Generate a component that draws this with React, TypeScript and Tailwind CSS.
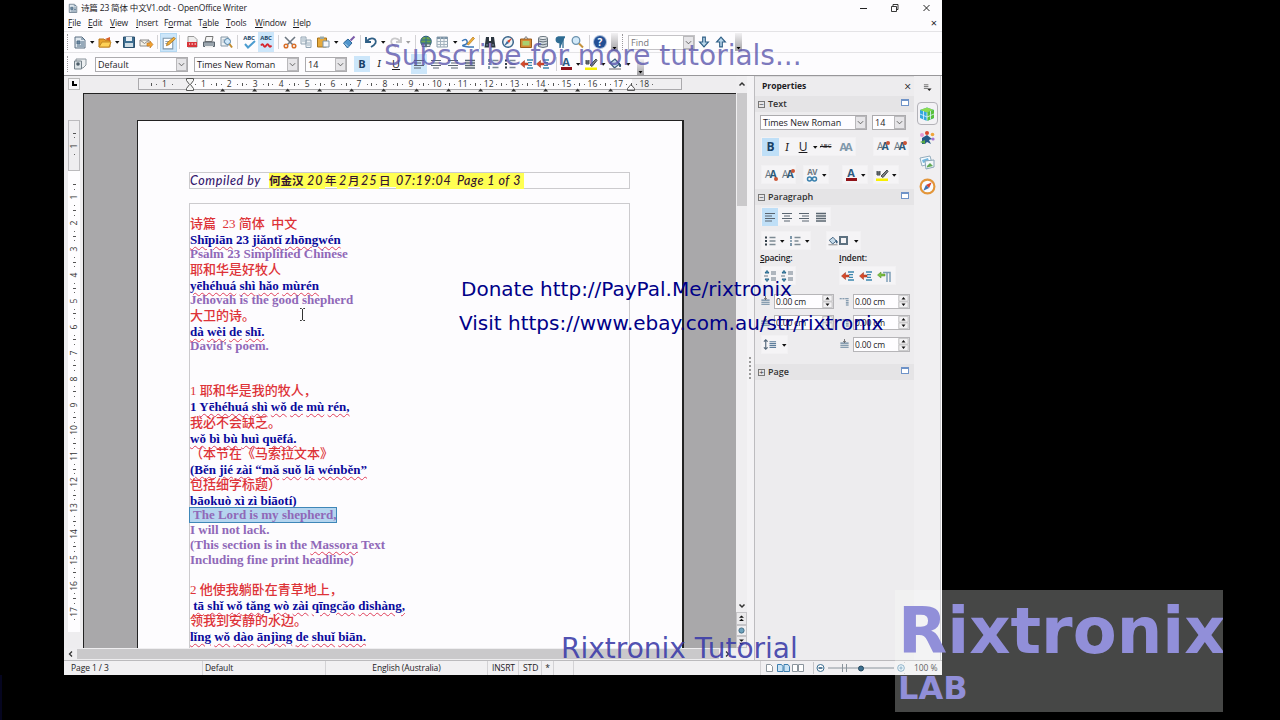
import { type ReactNode } from "react";
import clsx from "clsx";

const navy = "#2f5f86";

// every toolbar glyph is drawn on a 16x16 grid
const glyphs: Record<string, ReactNode> = {
  doc: (
    <>
      <path d="M3 3h7l3 3v8H3z" fill="#dfe7ee" stroke="#5b6f82" />
      <path d="M5 7h3v3H5zM9 8h3M9 10h3M5 12h7M9 5h3" fill="#6f8ba4" stroke="#4f6c86" />
    </>
  ),
  open: (
    <>
      <path d="M2 5h5l1 1h5v7H2z" fill="#e9a32c" stroke="#b5741b" />
      <path d="M2 13l3-5h9l-2 5z" fill="#ffd257" stroke="#c58a24" />
      <path d="M8 5l5-2v4z" fill="#d9602b" />
    </>
  ),
  save: (
    <>
      <path d="M2.5 3h11v10.500h-11z" fill="#3f6f92" stroke="#2b4f6c" />
      <path d="M5 3h6v4H5z" fill="#e8f0f5" />
      <path d="M4 9h8v4H4z" fill="#cfdde6" />
    </>
  ),
  mail: (
    <>
      <path d="M2 6h9v6H2z" fill="#f4f1e6" stroke="#8b8b8b" />
      <path d="M2 6l4.500 3.500L11 6" fill="none" stroke="#8b8b8b" />
      <path d="M9 9h3V7l3 3.500-3 3.500v-2H9z" fill="#f0a030" stroke="#b8701b" strokeWidth=".6" />
    </>
  ),
  edit: (
    <>
      <path d="M3 4h9v10H3z" fill="#fff" stroke="#7d97ad" />
      <path d="M5 7h5M5 9h3" stroke="#8fa5b7" />
      <path d="M6 11l1-3 6-5 1.500 1.500-6 5.500z" fill="#f0b13a" stroke="#a06a1b" strokeWidth=".7" />
    </>
  ),
  pdf: (
    <>
      <path d="M4 2.500h6l3 3V13H4z" fill="#eee" stroke="#999" />
      <path d="M3 8h10v5H3z" fill="#d8343a" />
      <path d="M5 10h1M7.500 10h1.500M10.500 10h1.500" stroke="#fff" />
    </>
  ),
  print: (
    <>
      <path d="M5 2.500h7l-1 5H4z" fill="#f5f5f5" stroke="#777" />
      <path d="M2.500 8h11v4.500h-11z" fill="#9aa4ad" stroke="#59636c" />
      <path d="M4 12h8v1.500H4z" fill="#eee" />
    </>
  ),
  preview: (
    <>
      <path d="M3 3h7v9H3z" fill="#eef2f5" stroke="#8496a5" />
      <path d="M4.500 6h3M4.500 8h3" stroke="#9ab" />
      <circle cx="9.500" cy="7.500" r="3" fill="#cfe8fb" stroke="#4f7c9e" />
      <path d="M11.500 10l2.500 3.500" stroke="#c18a2c" strokeWidth="2" />
    </>
  ),
  check: <path d="M4 10l3 3.500L14 7" fill="none" stroke="#4b9cd0" strokeWidth="2" />,
  wave: <path d="M3 11.500q1.400-2.500 2.600 0t2.600 0 2.600 0 2.600 0" fill="none" stroke="#d6242c" strokeWidth="1.800" />,
  cut: (
    <>
      <path d="M3 3l8 8M13 3l-8 8" stroke="#6d7781" strokeWidth="1.600" />
      <circle cx="4" cy="12" r="1.800" fill="none" stroke="#d9702b" strokeWidth="1.500" />
      <circle cx="12" cy="12" r="1.800" fill="none" stroke="#d9702b" strokeWidth="1.500" />
    </>
  ),
  copy: (
    <>
      <path d="M3 3h5v7H3zM8 6h5v7.500H8z" fill="#eef2f5" stroke="#92a4b3" />
      <path d="M4 5h3M4 7h3M9 9h3M9 11h3" stroke="#9fb1c0" />
    </>
  ),
  paste: (
    <>
      <path d="M2.500 4h9v9h-9z" fill="#e6a93b" stroke="#a5731c" />
      <path d="M5 2.500h4V5H5z" fill="#9aa" />
      <path d="M8 7h6v6H8z" fill="#f6f8fa" stroke="#7d93a6" />
    </>
  ),
  brush: (
    <>
      <path d="M13.500 2.500l-4 4" stroke="#7a5aa8" strokeWidth="2" />
      <path d="M7 5l4 4-4.500 5L2.500 9z" fill="#4f94cc" stroke="#2d6798" />
      <path d="M4 9.500l3 3" stroke="#bfe0f6" />
    </>
  ),
  undo: <path d="M3 3v5h5M3.500 7.500Q8 2.500 12 5.500 15 9 8 13" fill="none" stroke={navy} strokeWidth="1.900" />,
  redo: <path d="M13 3v5H8M12.500 7.500Q8 2.500 4 5.500 1 9 8 13" fill="none" stroke="#c9c9cb" strokeWidth="1.900" />,
  globe: (
    <>
      <circle cx="8" cy="7.500" r="5.300" fill="#6da54b" stroke="#2d5c7c" />
      <path d="M3 6h10M3 9h10M8 2v11" stroke="#2d6a94" />
      <path d="M4 10h3.500v2.500H4zM8.500 10H12v2.500H8.500z" fill="#dbe3e8" stroke="#56656f" strokeWidth=".8" />
    </>
  ),
  table: (
    <>
      <path d="M3 3h10.500v10H3z" fill="#f3f6f8" stroke="#8fa1b0" />
      <path d="M3 4h10.500" stroke="#7c93a6" strokeWidth="2" />
      <path d="M3 7.500h10.500M3 10.500h10.500M6.500 3v10M10 3v10" stroke="#a4b3bf" />
    </>
  ),
  draw: (
    <>
      <path d="M2 7q4-3 5 0t-3 4 5 2h5" fill="none" stroke="#3a76b5" strokeWidth="1.500" />
      <path d="M7 10l6-7 1.500 1.500-6 6.500z" fill="#f3b23a" stroke="#ad7420" strokeWidth=".7" />
    </>
  ),
  find: (
    <>
      <path d="M4 3h3v4h2V3h3l1.500 10.500H9V9H7v4.500H2.500z" fill="#2c3640" />
      <path d="M4 11h2M10 11h2" stroke="#7690a5" />
    </>
  ),
  compass: (
    <>
      <circle cx="8" cy="8" r="5.300" fill="#eef4f8" stroke="#3d678c" strokeWidth="1.500" />
      <path d="M12 4L9 9 7 7z" fill="#d84128" />
      <path d="M4 12l3-5 2 2z" fill="#3d6ca0" />
    </>
  ),
  gallery: (
    <>
      <path d="M2.500 5h11v8.500h-11z" fill="#d58a34" stroke="#9a5b1c" />
      <path d="M4.500 7h7v4.500h-7z" fill="#a9cf70" />
      <path d="M6 5l2-2.500L10 5" fill="none" stroke="#777" />
    </>
  ),
  data: (
    <>
      <path d="M3.500 4v8.500q4.500 2 9 0V4" fill="#cfd6db" stroke="#66727c" />
      <ellipse cx="8" cy="4" rx="4.500" ry="1.500" fill="#eff2f4" stroke="#66727c" />
      <path d="M3.500 7q4.500 2 9 0M3.500 9.800q4.500 2 9 0" fill="none" stroke="#66727c" />
    </>
  ),
  pilcrow: <path d="M13 3H6.500a2.800 2.800 0 000 5.500H8V14M8 3v11M11 3v11" fill="#2f6c93" stroke="#2f6c93" strokeWidth="1.300" />,
  zoom: (
    <>
      <circle cx="7" cy="6.500" r="3.800" fill="#d2e9f9" stroke="#6c92ae" strokeWidth="1.300" />
      <path d="M10 9.500l4 4" stroke="#c5923d" strokeWidth="2" />
    </>
  ),
  down: <path d="M6.500 2.500h3V8H13l-5 5.500L3 8h3.500z" fill="#bcd9ec" stroke={navy} strokeWidth="1.300" />,
  up: <path d="M6.500 13.500h3V8H13L8 2.500 3 8h3.500z" fill="#bcd9ec" stroke={navy} strokeWidth="1.300" />,
  styles: (
    <>
      <path d="M4 3h10v6l-3 3H4z" fill="#eceff1" stroke="#8a949c" />
      <path d="M2.500 5h7v8h-7z" fill="#dce2e6" stroke="#75818a" />
      <circle cx="6" cy="8" r="1.800" fill="#4d5d69" />
    </>
  ),
  left: <path d="M3 4.500h10M3 7h7M3 9.500h10M3 12h7" stroke="#5a6570" strokeWidth="1.200" />,
  center: <path d="M3 4.500h10M5 7h6M3 9.500h10M5 12h6" stroke="#5a6570" strokeWidth="1.200" />,
  right: <path d="M3 4.500h10M6 7h7M3 9.500h10M6 12h7" stroke="#5a6570" strokeWidth="1.200" />,
  justify: <path d="M3 4.500h10M3 7h10M3 9.500h10M3 12h10" stroke="#5a6570" strokeWidth="1.400" />,
  bullets: (
    <>
      <path d="M3 4.500h2M3 8h2M3 11.500h2" stroke="#333f49" strokeWidth="2" />
      <path d="M7.500 4.500h6M7.500 8h6M7.500 11.500h6" stroke="#7d8a94" strokeWidth="1.300" />
    </>
  ),
  numbers: (
    <>
      <path d="M4 3v3M3 8h2M4 10v3" stroke="#2d5877" strokeWidth="1.200" />
      <path d="M7.500 4.500h6M7.500 8h4M7.500 11.500h6" stroke="#7d8a94" strokeWidth="1.300" />
    </>
  ),
  indent: (
    <>
      <path d="M8 4h6M9 6.700h4M9 9.300h4M8 12h6" stroke="#3c86ae" strokeWidth="1.300" />
      <path d="M1.500 8L5.500 4.500V7H9v2H5.500v2.500z" fill="#d84a2a" stroke="#97301c" strokeWidth=".5" />
    </>
  ),
  firstline: (
    <>
      <path d="M7 4.500h7V14M11 5v9" fill="none" stroke="#7f9fb8" strokeWidth="1.500" />
      <path d="M1.500 7L5 4v2h4v2H5v2z" fill="#7cc243" stroke="#4c8424" strokeWidth=".5" />
    </>
  ),
  marker: (
    <>
      <path d="M2 11.500h12V14H2z" fill="#f8f000" />
      <path d="M3 4v4h3V4M6 6H3M7 9l6-6 1 1.500-5 6z" fill="#7d8285" stroke="#454a4d" />
    </>
  ),
  bucket: (
    <>
      <path d="M3 7l5-4 4.500 5-5 4z" fill="#c6dbea" stroke="#3c5e7b" strokeWidth="1.200" />
      <path d="M12 7q3 2 1 4z" fill="#3472a2" stroke="#274c6c" />
      <path d="M2 13h12" stroke="#999" strokeWidth="1.500" />
    </>
  ),
  spacing: (
    <>
      <path d="M5 2.500L7 5H3zM5 13.500L7 11H3z" fill="#4d96c2" stroke="#296587" />
      <path d="M9 4h5M9 6h5M9 10h5M9 12h5M2 8h4" stroke="#6b7985" strokeWidth="1.200" />
    </>
  ),
  lines: (
    <>
      <path d="M2 6h12M2 9h12M2 12h12" stroke="#66829c" strokeWidth="1.500" />
      <path d="M8 0v5M6 3l2 2 2-2" stroke="#444" fill="none" />
    </>
  ),
  dashes: <path d="M1 4h3M5 4h3M9 4h5M10 7h4M10 10h4M10 13h4" stroke="#66829c" strokeWidth="1.500" />,
  lineHeight: (
    <>
      <path d="M4 3v10M2 5l2-2 2 2M2 11l2 2 2-2" fill="none" stroke="#55687a" strokeWidth="1.200" />
      <path d="M8 5h7M8 7h7M8 9h7M8 11h7" stroke="#5d7d9b" strokeWidth="1.200" />
    </>
  ),
};

const Icon = ({ name, className = "size-4" }: { name: string; className?: string }) => (
  <svg viewBox="0 0 16 16" className={clsx("shrink-0", className)}>
    {glyphs[name]}
  </svg>
);

const Caret = ({ className }: { className?: string }) => (
  <svg viewBox="0 0 8 16" className={clsx("h-4 w-2 shrink-0", className)}>
    <path d="M2 7h4.500L4.200 9.700z" fill="#111" />
  </svg>
);

const Sep = ({ className }: { className: string }) => (
  <span className={clsx("h-3.5 w-px shrink-0 bg-[#d3d2d5]", className)} />
);

const Grip = ({ className }: { className?: string }) => (
  <span className={clsx("h-4 w-0 shrink-0 border-l border-dotted border-[#9a999c]", className)} />
);

const Overflow = ({ className }: { className?: string }) => (
  <span className={clsx("flex w-[7px] shrink-0 items-end justify-center bg-linear-to-b from-[#f2f1f3] to-[#a3a2a5]", className)}>
    <svg viewBox="0 0 7 6" className="h-1.5 w-[7px]">
      <path d="M1.500 2h4L3.500 4.500z" fill="#000" />
    </svg>
  </span>
);

const Chevron = () => (
  <span className="flex w-[11px] shrink-0 items-center justify-center border border-[#b9b8bb] bg-[#e6e5e8]">
    <svg viewBox="0 0 8 8" className="size-[7px]">
      <path d="M1 2.500l3 3 3-3" fill="none" stroke="#555" />
    </svg>
  </span>
);

const Combo = ({ text, className }: { text: string; className: string }) => (
  <div className={clsx("flex h-[15px] shrink-0 justify-between border border-[#acabae] bg-[#fefdff]", className)}>
    <span className="pl-[2px] leading-[13px]">{text}</span>
    <Chevron />
  </div>
);

// letter glyph used by the character format buttons
const Letter = ({ children, className }: { children: ReactNode; className?: string }) => (
  <span className={clsx("flex size-4 shrink-0 items-center justify-center text-[11px] leading-4", className)}>{children}</span>
);

const ColorA = () => (
  <span className="flex size-4 shrink-0 flex-col items-center">
    <b className="h-[11px] text-[11px] leading-[12px] text-[#2c5a80]">A</b>
    <span className="h-[3px] w-[11px] bg-[#8f1218]" />
  </span>
);

const Abc = ({ mark }: { mark: string }) => (
  <span className="relative size-4 shrink-0">
    <span className="absolute inset-x-0 top-px text-center text-[6px] leading-[7px] font-bold tracking-[-0.2px] text-[#1d4668]">ABC</span>
    <Icon name={mark} className="size-4" />
  </span>
);

const menu = [
  { pre: "", key: "F", rest: "ile", w: "w-5" },
  { pre: "", key: "E", rest: "dit", w: "w-[22px]" },
  { pre: "", key: "V", rest: "iew", w: "w-[26px]" },
  { pre: "", key: "I", rest: "nsert", w: "w-7" },
  { pre: "F", key: "o", rest: "rmat", w: "w-[34px]" },
  { pre: "T", key: "a", rest: "ble", w: "w-7" },
  { pre: "", key: "T", rest: "ools", w: "w-[29px]" },
  { pre: "", key: "W", rest: "indow", w: "w-[38px]" },
  { pre: "", key: "H", rest: "elp", w: "w-6" },
];

const TitleBar = () => (
  <>
    <div className="flex h-4 items-center pl-[3px]">
      <Icon name="doc" className="size-3" />
      <span className="ml-[2px] text-[8.5px] tracking-[-0.17px] whitespace-nowrap">诗篇 23 简体 中文V1.odt - OpenOffice Writer</span>
      <svg viewBox="0 0 80 12" className="mr-3 ml-auto h-3 w-20 shrink-0" fill="none" stroke="#222">
        <path d="M10 6.500h7" />
        <path d="M41.500 4.500h5v5h-5zM43 4V2.500h5v5h-1.500" strokeWidth=".9" />
        <path d="M73.500 3l6 6M79.500 3l-6 6" />
      </svg>
    </div>
    <div className="flex h-[15px] items-center pl-1 text-[8.5px] tracking-[-0.15px]">
      {menu.map((m, i) => (
        <span key={i} className={clsx("shrink-0", m.w)}>
          {m.pre}
          <u>{m.key}</u>
          {m.rest}
        </span>
      ))}
      <span className="mr-[5px] ml-auto text-[11px]">×</span>
    </div>
  </>
);

const StandardBar = () => (
  <div className="flex h-[21px] items-center border-t border-[#e4e3e6]">
    <Grip className="mr-1 ml-[3px]" />
    <Icon name="doc" />
    <Caret className="mr-px" />
    <Icon name="open" />
    <Caret />
    <Icon name="save" />
    <Icon name="mail" className="ml-px size-4" />
    <Sep className="mr-[2px] ml-[3px]" />
    <span className="border border-[#b4d8f2] bg-[#cce6fa]">
      <Icon name="edit" className="-mx-px size-[17px]" />
    </span>
    <Sep className="mr-[4px] ml-[2px]" />
    <Icon name="pdf" />
    <Icon name="print" className="mx-px size-4" />
    <Icon name="preview" />
    <Sep className="mx-[3px]" />
    <Abc mark="check" />
    <span className="ml-px bg-[#cce6fa] py-0.5">
      <Abc mark="wave" />
    </span>
    <Sep className="mr-[3px] ml-[4px]" />
    <Icon name="cut" />
    <Icon name="copy" />
    <Icon name="paste" className="ml-px size-4" />
    <Caret className="mx-px" />
    <Icon name="brush" />
    <Sep className="ml-[3px]" />
    <Icon name="undo" className="ml-[2px] size-4" />
    <Caret className="mr-px" />
    <Icon name="redo" />
    <Caret className="opacity-40" />
    <Sep className="mr-[2px] ml-[3px]" />
    <Icon name="globe" />
    <Icon name="table" />
    <Caret className="mx-px" />
    <Icon name="draw" />
    <Sep className="mr-[2px] ml-[3px]" />
    <Icon name="find" />
    <Icon name="compass" className="mx-[2px] size-4" />
    <Icon name="gallery" />
    <Icon name="data" className="mx-px size-4" />
    <Icon name="pilcrow" />
    <Icon name="zoom" className="ml-px size-4" />
    <Sep className="mr-[2px] ml-[4px]" />
    <span className="mx-[2px] flex size-3 items-center justify-center rounded-full bg-[#234f94] text-[10px] font-bold text-white ring-1 ring-[#a7bbd8]">?</span>
    <Overflow className="ml-[3px] h-[18px]" />
    <Grip className="mr-[5px] ml-1" />
    <div className="flex h-[15px] w-[67px] shrink-0 justify-between border border-[#c4c3c6] bg-white text-[#77767a]">
      <span className="pl-[2px] leading-[13px]">Find</span>
      <Chevron />
    </div>
    <Icon name="down" className="ml-[2px] size-[14px]" />
    <Icon name="up" className="ml-[3px] size-[14px]" />
    <Overflow className="ml-[7px] h-[18px]" />
  </div>
);

const FormatBar = () => (
  <div className="flex h-[23px] items-center border-t border-[#e4e3e6]">
    <Grip className="mr-[4px] ml-[3px]" />
    <Icon name="styles" />
    <Combo text="Default" className="ml-[7px] w-[93px]" />
    <Combo text="Times New Roman" className="ml-[6px] w-[105px]" />
    <Combo text="14" className="ml-[6px] w-[42px]" />
    <Letter className="ml-[7px] bg-[#cce6fa] font-bold text-[#174066]">B</Letter>
    <Letter className="ml-px font-serif italic">I</Letter>
    <Letter className="ml-px underline">U</Letter>
    <span className="ml-[7px] bg-[#cce6fa] py-0.5">
      <Icon name="left" />
    </span>
    <Icon name="center" className="ml-px size-4" />
    <Icon name="right" className="ml-px size-4" />
    <Icon name="justify" className="ml-px size-4" />
    <Icon name="numbers" className="ml-[7px] size-4" />
    <Icon name="bullets" className="mx-px size-4" />
    <Icon name="indent" />
    <Icon name="indent" />
    <Sep className="mr-px ml-[5px]" />
    <ColorA />
    <Caret className="mr-px" />
    <Icon name="marker" />
    <Caret />
    <Icon name="bucket" />
    <Caret className="ml-px" />
    <Overflow className="ml-[5px] h-4 self-end" />
  </div>
);

const Cell = ({ n, vertical }: { n: number; vertical?: boolean }) => (
  <div className={clsx("flex shrink-0 items-center justify-between text-[8.5px] text-[#333]", vertical ? "h-[25.900px] flex-col" : "w-[25.950px]")}>
    <i className={clsx("bg-[#555]", vertical ? "h-px w-[3px]" : "h-[3px] w-px")} />
    <i className="size-px bg-[#666]" />
    <span className={clsx("flex w-2 justify-center leading-[8px]", vertical && "h-2 -rotate-90")}>{n}</span>
    <i className="size-px bg-[#666]" />
    <i className="size-0" />
  </div>
);

const HRuler = () => (
  <div className="flex h-[17px] items-center bg-[#eeedef]">
    <div className="ml-1 flex size-3 items-center justify-center border border-[#bbb] bg-[#f8f7f9] pb-px">
      <span className="size-[5px] border-b-2 border-l-2 border-black" />
    </div>
    <div className="relative ml-[58px] flex h-3 w-[544px] items-center overflow-visible border border-[#aaa9ac] bg-[#f0eff1]">
      <div className="absolute inset-y-0 left-[51px] w-[442px] bg-[#fefdff]" />
      <div className="relative flex h-full items-center pl-[12px]">
        <Cell n={1} />
        <div className="w-[25.950px] shrink-0" />
      </div>
      <div className="relative -ml-[13px] flex h-full items-center">
        {Array.from({ length: 18 }, (_, i) => (
          <Cell key={i} n={i + 1} />
        ))}
      </div>
      <div className="absolute top-[9px] left-[81px] flex">
        {Array.from({ length: 13 }, (_, i) => (
          <svg key={i} viewBox="0 0 32 4" className="h-1 w-[32.300px] shrink-0">
            <path d="M0 3.500h5L2.500 .5z" fill="#333" />
          </svg>
        ))}
      </div>
      <svg viewBox="0 0 8 13" className="absolute -top-px left-[47px] h-[13px] w-2" fill="#f4f4f4" stroke="#555">
        <path d="M.5 .5h7v2L4.500 6.500l3 4v2h-7v-2l3-4-3-4z" />
      </svg>
      <svg viewBox="0 0 8 7" className="absolute top-[5px] left-[488px] h-[7px] w-2" fill="none" stroke="#555">
        <path d="M4 .5l3.500 4v2h-7v-2z" />
      </svg>
    </div>
  </div>
);

const VRuler = () => (
  <div className="w-[19px] shrink-0 bg-[#eeedef] pt-[27px] pl-1">
    <div className="flex h-[512px] w-3 flex-col overflow-hidden bg-[#fefdff]">
      <div className="flex h-[51px] shrink-0 flex-col items-center justify-center border border-[#bbbabd] bg-[#eeedef]">
        <Cell n={1} vertical />
      </div>
      <div className="flex flex-col items-center pt-[13px]">
        {Array.from({ length: 17 }, (_, i) => (
          <Cell key={i} n={i + 1} vertical />
        ))}
      </div>
    </div>
  </div>
);

type LineType = { t: "c" | "p" | "e"; s: string; sel?: boolean };

const lines: LineType[] = [
  { t: "c", s: "诗篇  23 简体  中文" },
  { t: "p", s: "Shīpiān 23 jiǎntǐ zhōngwén" },
  { t: "e", s: "Psalm 23 Simplified Chinese" },
  { t: "c", s: "耶和华是好牧人" },
  { t: "p", s: "yēhéhuá shì hǎo mùrén" },
  { t: "e", s: "Jehovah is the good shepherd" },
  { t: "c", s: "大卫的诗。" },
  { t: "p", s: "dà wèi de shī." },
  { t: "e", s: "David's poem." },
  { t: "e", s: "" },
  { t: "e", s: "" },
  { t: "c", s: "1 耶和华是我的牧人，" },
  { t: "p", s: "1 Yēhéhuá shì wǒ de mù rén," },
  { t: "c", s: "我必不会缺乏。" },
  { t: "p", s: "wǒ bì bù huì quēfá." },
  { t: "c", s: "（本节在《马索拉文本》" },
  { t: "p", s: "(Běn jié zài “mǎ suǒ lā wénběn”" },
  { t: "c", s: "包括细字标题）" },
  { t: "p", s: "bāokuò xì zì biāotí)" },
  { t: "e", s: " The Lord is my shepherd,", sel: true },
  { t: "e", s: "I will not lack." },
  { t: "e", s: "(This section is in the Massora Text" },
  { t: "e", s: "Including fine print headline)" },
  { t: "e", s: "" },
  { t: "c", s: "2 他使我躺卧在青草地上，" },
  { t: "p", s: " tā shǐ wǒ tǎng wò zài qīngcǎo dìshàng," },
  { t: "c", s: "领我到安静的水边。" },
  { t: "p", s: "lǐng wǒ dào ānjìng de shuǐ biān." },
];

const DocLine = ({ line }: { line: LineType }) => {
  // misspelled words get the red squiggle
  const words = line.s.split(/( )/).map((w, i) => {
    const bad = line.t === "p" ? /[a-zà-ǿǐǎǒ]/i.test(w) : w === "Massora";
    return (
      <span key={i} className={clsx(bad && "underline decoration-[#e0405a] decoration-wavy decoration-[0.5px] underline-offset-[1.500px]")}>
        {w}
      </span>
    );
  });
  return (
    <div
      className={clsx(
        "whitespace-pre",
        line.t === "c" && "h-4 text-[13px] leading-4 font-medium text-[#dd3338]",
        line.t === "p" && "h-[15.300px] text-[13px] leading-[15.300px] font-bold text-[#0a0a9c]",
        line.t === "e" && "h-[14.700px] text-[13px] leading-[14.700px] font-bold text-[#9068b8]"
      )}
    >
      {line.sel ? <span className="inline-block h-[14px] bg-[#b5d5ef] leading-[14px] outline outline-[#3f87b8]">{words}</span> : words}
    </div>
  );
};

const PageHeader = () => (
  <div className="flex h-[17px] w-[441px] border border-[#cccbce] font-['Lato','Noto_Sans_CJK_SC',sans-serif] text-[12.5px] leading-[15px] font-medium whitespace-nowrap text-[#351530] italic">
    <span className="w-[79px] tracking-[0.600px] text-[#35186e]">Compiled by</span>
    <span className="w-[37px] bg-[#ffff52] text-[11.500px] font-bold not-italic">何金汉</span>
    <span className="-mb-px w-[19px] bg-[#ffff52] pl-px tracking-[1px]">20</span>
    <span className="mb-px w-[12px] bg-[#ffff52] text-[11.500px] not-italic">年</span>
    <span className="-mb-px w-[11px] bg-[#ffff52] pl-[2px]">2</span>
    <span className="mb-px w-[12px] bg-[#ffff52] text-[11.500px] not-italic">月</span>
    <span className="-mb-px w-[19px] bg-[#ffff52] pl-px tracking-[1px]">25</span>
    <span className="mb-px w-[17px] bg-[#ffff52] text-[11.500px] not-italic">日</span>
    <span className="-mb-px w-[61px] bg-[#ffff52] tracking-[0.700px]">07:19:04</span>
    <span className="-mb-px w-[67px] bg-[#ffff52] tracking-[0.500px]">Page 1 of 3</span>
  </div>
);

const Paper = () => (
  <div className="ml-[53px] h-full w-[547px] shrink-0 border-t border-r-2 border-l border-[#222] bg-[#fdfcfe] pt-[51px] pl-[51px]">
    <PageHeader />
    <div className="relative mt-[14px] h-[446px] w-[441px] border border-b-0 border-[#cccbce] pt-[12px] font-['Liberation_Serif','Noto_Sans_CJK_SC',serif]">
      {lines.map((line, i) => (
        <DocLine key={i} line={line} />
      ))}
      <svg viewBox="0 0 7 13" className="absolute top-[104px] left-[109px] h-[13px] w-[7px]" fill="none" stroke="#333">
        <path d="M1 .5h1.500l1 1 1-1H6M3.500 1v11M1 12.500h1.500l1-1 1 1H6" />
      </svg>
    </div>
  </div>
);

const ScrollBtn = ({ d }: { d: string }) => (
  <svg viewBox="0 0 11 12" className="h-[12.500px] w-[11px] border border-[#c5c4c7] bg-[#eae9eb]">
    <path d={d} fill="#111" />
  </svg>
);

const VScroll = () => (
  <div className="flex w-[11px] shrink-0 flex-col items-center bg-[#efeef0]">
    <svg viewBox="0 0 8 8" className="my-[4px] size-2 shrink-0" fill="none" stroke="#333" strokeWidth="1.500">
      <path d="M1.500 5.500L4 3l2.500 2.500" />
    </svg>
    <div className="mt-px h-[113px] w-[10px] shrink-0 bg-[#cac9cb]" />
    <svg viewBox="0 0 8 8" className="mt-auto mb-[2px] size-2 shrink-0" fill="none" stroke="#333" strokeWidth="1.500">
      <path d="M1.500 2.500L4 5l2.500-2.500" />
    </svg>
    <ScrollBtn d="M2.500 5.500l3-3 3 3zM2.500 9.500l3-3 3 3z" />
    <svg viewBox="0 0 11 12" className="h-[11px] w-[11px] border border-[#c5c4c7]">
      <circle cx="5.500" cy="6" r="3.500" fill="#6fa3bd" stroke="#305a72" />
    </svg>
    <ScrollBtn d="M2.500 2.500l3 3 3-3zM2.500 6.500l3 3 3-3z" />
  </div>
);

const SectionHead = ({ title, sign, className }: { title: string; sign: string; className?: string }) => (
  <div className={clsx("flex h-4 shrink-0 items-center bg-[#e5e4e6] pl-[3px] text-[9px] font-semibold text-[#333]", className)}>
    <span className="mr-[3px] flex size-[7px] items-center justify-center border border-[#777] text-[8px] leading-none font-normal">{sign}</span>
    {title}
    <span className="mt-[-4px] mr-[5px] ml-auto h-[7px] w-2 border border-t-2 border-[#6f93c8] bg-white" />
  </div>
);

const Group = ({ children, className }: { children: ReactNode; className?: string }) => (
  <div className={clsx("flex h-[19px] shrink-0 items-center border border-[#f2f1f3] bg-[#f5f4f6]", className)}>{children}</div>
);

const Spin = ({ className }: { className: string }) => (
  <div className={clsx("flex h-[15px] shrink-0 justify-between border border-[#b6b5b8] bg-[#fefdff]", className)}>
    <span className="pl-px text-[8.500px] leading-[13px] tracking-[-0.150px]">0.00 cm</span>
    <svg viewBox="0 0 11 13" className="h-[13px] w-[11px] bg-[#dddcdf]">
      <path d="M1 .5h9v5.500H1zM1 7h9v5.500H1z" fill="#f2f1f3" stroke="#bbb" strokeWidth=".6" />
      <path d="M3.500 4.500h4l-2-2.500zM3.500 8.500h4l-2 2.500z" fill="#111" />
    </svg>
  </div>
);

const SizeA = ({ mark }: { mark: string }) => (
  <span className="relative flex size-4 shrink-0 items-center justify-center text-[10px] font-bold tracking-[-1.500px] text-[#2d5876]">
    <span className="font-normal text-[#66747f]">A</span>A
    <i className={clsx("absolute right-0 size-1 rounded-full bg-[#c95435]", mark)} />
  </span>
);

const Sidebar = () => (
  <div className="flex w-[159px] shrink-0 flex-col bg-[#edecee]">
    <div className="flex h-5 shrink-0 items-center border-t border-[#dddcde] pl-[7px] text-[8.500px] font-bold">
      Properties
      <span className="mr-[3px] ml-auto text-[12px] font-normal">×</span>
    </div>
    <SectionHead title="Text" sign="−" />
    <div className="mt-[3px] flex pl-[5px]">
      <Combo text="Times New Roman" className="w-[107px]" />
      <Combo text="14" className="ml-[5px] w-[34px]" />
    </div>
    <div className="mt-[7px] flex pl-[6px]">
      <Group className="w-[95px]">
        <Letter className="h-[18px] w-[17px] bg-[#bfdff7] text-[12px] font-bold text-[#174066]">B</Letter>
        <Letter className="font-serif text-[12px] italic">I</Letter>
        <Letter className="text-[12px] underline">U</Letter>
        <Caret />
        <span className="ml-px w-4 text-[6px] line-through">ABC</span>
        <Letter className="ml-px font-bold tracking-[-2px] text-[#7f98ab]">AA</Letter>
      </Group>
      <Group className="ml-[17px] w-[36px] gap-px">
        <SizeA mark="top-0.5" />
        <SizeA mark="top-0.5 rotate-45" />
      </Group>
    </div>
    <div className="mt-[9px] flex pl-[6px]">
      <Group className="w-[35px] gap-px">
        <SizeA mark="bottom-0.5" />
        <SizeA mark="top-0.5" />
      </Group>
      <Group className="ml-[7px] w-[26px]">
        <span className="relative flex size-4 flex-col items-center text-[8px] leading-[9px] font-bold tracking-[-0.500px] text-[#6d7780]">
          AV
          <svg viewBox="0 0 12 6" className="h-1.5 w-3" fill="none" stroke="#3980ad" strokeWidth="1.500">
            <circle cx="3.500" cy="3" r="2" />
            <circle cx="8.500" cy="3" r="2" />
          </svg>
        </span>
        <Caret />
      </Group>
      <Group className="ml-[13px] w-[26px]">
        <ColorA />
        <Caret />
      </Group>
      <Group className="ml-[5px] w-[26px]">
        <Icon name="marker" />
        <Caret />
      </Group>
    </div>
    <SectionHead title="Paragraph" sign="−" className="mt-[5px]" />
    <div className="mt-[2px] flex pl-[6px]">
      <Group className="w-[70px] gap-px">
        <span className="bg-[#bfdff7] py-px">
          <Icon name="left" />
        </span>
        <Icon name="center" />
        <Icon name="right" />
        <Icon name="justify" />
      </Group>
    </div>
    <div className="mt-[5px] flex pl-[6px]">
      <Group className="w-[50px]">
        <Icon name="bullets" />
        <Caret />
        <Icon name="numbers" className="ml-px size-4" />
        <Caret />
      </Group>
      <Group className="ml-[15px] w-[35px]">
        <Icon name="bucket" className="size-3" />
        <span className="size-[9px] border-2 border-[#5d7180]" />
        <Caret className="ml-[4px]" />
      </Group>
    </div>
    <div className="mt-[1px] flex h-[14px] pl-[5px] text-[8.500px] leading-[14px] font-semibold tracking-[-0.200px]">
      <span className="w-[79px]">
        <u>S</u>pacing:
      </span>
      <span>
        <u>I</u>ndent:
      </span>
    </div>
    <div className="mt-px flex pl-[6px]">
      <Group className="w-[35px] gap-px">
        <Icon name="spacing" />
        <Icon name="spacing" />
      </Group>
      <Group className="ml-[43px] w-[57px] gap-[2px]">
        <Icon name="indent" />
        <Icon name="indent" />
        <Icon name="firstline" />
      </Group>
    </div>
    <div className="mt-[9px] flex items-center pl-[5px]">
      <Icon name="lines" className="size-[11px]" />
      <Spin className="ml-[3px] w-[60px]" />
      <Icon name="dashes" className="ml-[5px] size-[11px]" />
      <Spin className="ml-[3px] w-[57px]" />
    </div>
    <div className="mt-[6px] flex items-center pl-[5px]">
      <Icon name="lines" className="size-[11px]" />
      <Spin className="ml-[3px] w-[60px]" />
      <Icon name="dashes" className="ml-[5px] size-[11px]" />
      <Spin className="ml-[3px] w-[57px]" />
    </div>
    <div className="mt-[5px] flex items-center pl-[6px]">
      <Group className="w-[27px]">
        <Icon name="lineHeight" className="size-[15px]" />
        <Caret className="ml-[3px]" />
      </Group>
      <Icon name="lines" className="ml-[51px] size-[11px]" />
      <Spin className="ml-[3px] w-[57px]" />
    </div>
    <SectionHead title="Page" sign="+" className="mt-[10px]" />
  </div>
);

const DeckTabs = () => (
  <div className="flex w-[27px] shrink-0 flex-col items-center border-r border-[#c9c8cb] bg-[#f0eff1]">
    <svg viewBox="0 0 10 10" className="mt-[7px] size-[9px]">
      <path d="M1 2h5M1 4h5M1 6h4" stroke="#666" />
      <path d="M4.500 6h5L7 9z" fill="#222" />
    </svg>
    <div className="mt-[10px] flex h-[23px] w-[21px] items-center justify-center rounded-sm border border-[#b3b2b8] bg-[#f3f2f5]">
      <svg viewBox="0 0 16 16" className="size-4">
        <path d="M1 4l7-2.500L15 4v8l-7 3-7-3z" fill="#35a8dc" />
        <path d="M1 4l7-2.500L15 4 8 6.500z" fill="#8ddc4d" />
        <path d="M8 6.500L15 4v8l-7 3z" fill="#58c03b" />
        <path d="M1 8l7 3 7-3M4.500 5v8.500M11.500 5v8.500M8 6.500V15" stroke="#dff3ff" fill="none" strokeWidth=".8" />
      </svg>
    </div>
    <svg viewBox="0 0 16 16" className="mt-[5px] size-4">
      <circle cx="8" cy="3" r="2" fill="#d9482f" />
      <circle cx="3" cy="5" r="2" fill="#e59ad2" />
      <circle cx="13.500" cy="4.500" r="1.800" fill="#f0a63a" />
      <circle cx="14" cy="9" r="1.600" fill="#a572d2" />
      <path d="M3 14V8l5-3 5 4-3 1 2 4-4-2-2 2z" fill="#235987" />
      <path d="M1 12l5-2v4z" fill="#58a944" />
    </svg>
    <svg viewBox="0 0 16 16" className="mt-2 size-4">
      <path d="M1 4l10-2 2 7-10 3z" fill="#f5fbff" stroke="#94adbd" />
      <path d="M3 6l6-2 1 3-6 2z" fill="#74b7df" />
      <path d="M6 7l9-1v7l-8 2z" fill="#f3f8fb" stroke="#88a5b7" />
      <path d="M8 12l3-3 3 3-6 1.500z" fill="#61a956" />
    </svg>
    <svg viewBox="0 0 16 16" className="mt-2 size-[17px]">
      <circle cx="8" cy="8" r="6.500" fill="#f8fbff" stroke="#e3963a" strokeWidth="2" />
      <path d="M12 4L9.500 9.500l-3-3z" fill="#d8432d" />
      <path d="M4 12l2.500-5.500 3 3z" fill="#3e71b0" />
    </svg>
  </div>
);

const StatusBar = () => (
  <div className="flex h-[15px] items-center border-t border-[#bbbabd] bg-[#f1f0f2] text-[8.500px] tracking-[-0.100px] whitespace-nowrap">
    <span className="w-[138px] pl-[7px]">Page 1 / 3</span>
    <Sep className="mr-[2px]" />
    <span className="w-[120px]">Default</span>
    <Sep className="" />
    <span className="w-[161px] text-center">English (Australia)</span>
    <Sep className="mr-1" />
    <span className="w-[26px]">INSRT</span>
    <Sep className="mr-1" />
    <span className="w-[18px]">STD</span>
    <Sep className="" />
    <span className="w-[11px] text-center">*</span>
    <Sep className="mr-[19px]" />
    <Sep className="" />
    <Sep className="ml-[186px]" />
    <svg viewBox="0 0 150 14" className="h-[14px] w-[150px]" fill="#fff" stroke="#8a949c">
      <path d="M5.500 3.500h4l2 2v5h-6zM31.500 3.500h5v7h-5zM37.500 3.500h5v7h-5z" />
      <path d="M16.500 3.500h4l1.500 2v5h-5.500zM23 3.500h4l1.500 2v5H23z" fill="#cbe4f6" stroke="#3c7eae" />
      <path d="M52.500 1v12M143.500 1v12" stroke="#c5c4c7" />
      <circle cx="59.500" cy="7" r="3.500" stroke="#3b6e90" />
      <path d="M57.500 7h4" stroke="#26567a" strokeWidth="1.500" />
      <path d="M67 7h66M81.500 3v8M85.500 3v8" />
      <circle cx="100" cy="7.500" r="2.500" fill="#3c6f8f" stroke="#24485f" />
      <circle cx="141" cy="7" r="3.500" stroke="#6c9cbb" className="hidden" />
    </svg>
    <svg viewBox="0 0 12 12" className="-ml-[15px] size-[10px] bg-[#f1f0f2]" fill="#e9f4fb" stroke="#4f87ab">
      <circle cx="6" cy="6" r="4" />
      <path d="M4 6h4M6 4v4" />
    </svg>
    <span className="ml-[8px] text-[8.500px]">100 %</span>
  </div>
);

const App = () => (
  <div className="relative h-[720px] w-[1280px] overflow-hidden bg-black font-['Open_Sans','Noto_Sans_CJK_SC',sans-serif] text-[9px] text-[#1c1b1e]">
    <div className="ml-16 flex h-[675px] w-[878px] flex-col bg-[#fdfcfe]">
      <TitleBar />
      <StandardBar />
      <FormatBar />
      <div className="flex h-[585px] border-t border-[#98979a]">
        <div className="flex w-[683px] shrink-0 flex-col">
          <div className="flex h-[572px]">
            <div className="flex w-[672px] shrink-0 flex-col">
              <HRuler />
              <div className="flex min-h-0 grow">
                <VRuler />
                <div className="w-[653px] overflow-hidden border-t border-l border-[#222] bg-[#a9a8aa] pt-[26px]">
                  <Paper />
                </div>
              </div>
            </div>
            <VScroll />
          </div>
          <div className="flex h-3 items-center bg-[#efeef0]">
            <svg viewBox="0 0 8 8" className="ml-[3px] size-2" fill="none" stroke="#333" strokeWidth="1.300">
              <path d="M5 1.500L2.500 4 5 6.500" />
            </svg>
            <div className="ml-[2px] h-[10px] w-[642px] bg-[#cac9cb]" />
            <svg viewBox="0 0 8 8" className="ml-[4px] size-2" fill="none" stroke="#333" strokeWidth="1.300">
              <path d="M3 1.500L5.500 4 3 6.500" />
            </svg>
          </div>
        </div>
        <div className="flex w-[8px] shrink-0 flex-col items-start justify-center border-r border-[#bdbcbf] bg-[#f4f3f5]">
          <span className="ml-[2px] h-[22px] border-l-2 border-dotted border-[#999]" />
        </div>
        <Sidebar />
        <DeckTabs />
      </div>
      <StatusBar />
    </div>

    {/* video captions */}
    <div className="absolute top-[675px] left-0 h-[45px] w-[2px] bg-[#05051f]" />
    <div className="absolute inset-0 font-['DejaVu_Sans',sans-serif] whitespace-nowrap">
      <p className="absolute top-[40px] left-[384px] text-[28px] leading-8 text-[#5a55ac]/80">Subscribe for more tutorials...</p>
      <p className="absolute top-[277px] left-[461px] text-[20px] leading-6 text-[#000088]">Donate http://PayPal.Me/rixtronix</p>
      <p className="absolute top-[311px] left-[459px] text-[20px] leading-6 text-[#000088]">Visit https://www.ebay.com.au/str/rixtronix</p>
      <p className="absolute top-[633px] left-[561px] text-[28px] leading-8 text-[#3a3aa8]/90">Rixtronix Tutorial</p>
      <div className="absolute top-[590px] left-[895px] h-[122px] w-[328px] overflow-hidden bg-[#fdfffa]/28 font-bold text-[#918fd9]">
        <p className="mt-[9px] ml-[3px] text-[64px] leading-[64px]">Rixtronix</p>
        <p className="mt-[9px] ml-[3px] text-[32px] leading-[32px]">LAB</p>
      </div>
    </div>
  </div>
);

export default App;
